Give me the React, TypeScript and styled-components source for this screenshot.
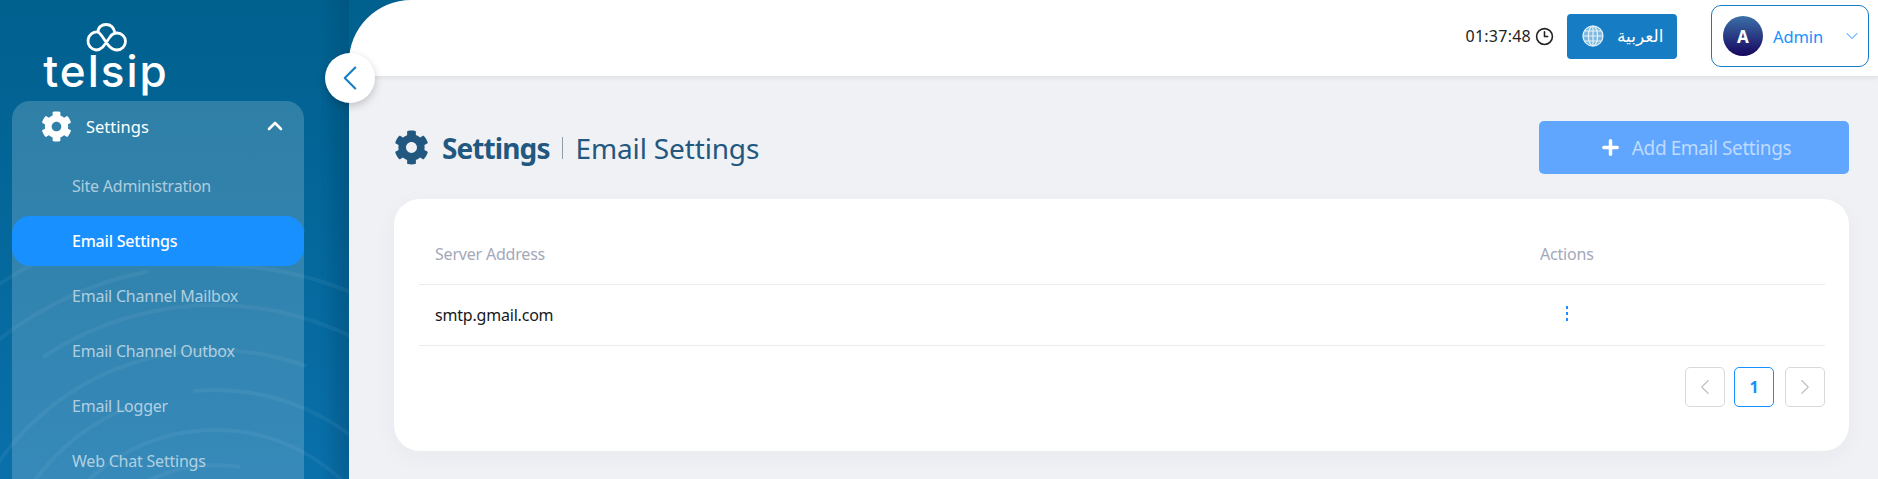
import { ChevronLeft, ChevronRight, ChevronDown, ChevronUp, Clock3, Plus } from 'lucide-react';
import { FaCog } from 'react-icons/fa';
import styled, { createGlobalStyle } from 'styled-components';

const menuItems = [
  { label: 'Site Administration' },
  { label: 'Email Settings', active: true },
  { label: 'Email Channel Mailbox' },
  { label: 'Email Channel Outbox' },
  { label: 'Email Logger' },
  { label: 'Web Chat Settings' },
];

const App = () => {
  return (
    <Shell>
      <GlobalStyle />
      <Sidebar>
        <Swirls viewBox="0 0 349 479" aria-hidden="true">
          {[150, 185, 225, 265, 310, 350, 395].map((r, i) => (
            <circle key={r} cx="215" cy="615" r={r} strokeDasharray="430 70" strokeDashoffset={i * 130 + 700} />
          ))}
        </Swirls>
        <Logo>
          <svg width="44" height="31" viewBox="-1 -1 44 31" fill="none" stroke="#fff" strokeWidth="2.8" strokeLinecap="round">
            <path d="M13 9A9 9 0 0 0 11 27C18 27 21 19 25 14 27 11 29 10 32 10A8.5 8.5 0 0 1 32 27C26 27 23 22 19 16 17 13 15 10 13 9" />
            <path d="M13 9C13 4 17 1.5 21 1.5 26 1.5 29 5 30 10" />
          </svg>
          <LogoText>telsip</LogoText>
        </Logo>
        <MenuPanel>
          <MenuGroup>
            <FaCog size={31} color="#fff" />
            <GroupLabel>Settings</GroupLabel>
            <ChevronUp size={24} strokeWidth={2.6} color="#fff" />
          </MenuGroup>
          {menuItems.map((item) => (
            <MenuItem key={item.label} $active={item.active}>
              {item.label}
            </MenuItem>
          ))}
        </MenuPanel>
      </Sidebar>

      <CollapseButton>
        <ChevronLeft size={42} strokeWidth={1.2} color="#167dc4" />
      </CollapseButton>

      <Main>
        <Header>
          <Time>01:37:48</Time>
          <Clock3 size={19} strokeWidth={2} color="#222" />
          <LangButton>
            <svg width="22" height="22" viewBox="0 0 22 22" fill="none" stroke="#e4f1fa" strokeWidth="1.2">
              <circle cx="11" cy="11" r="10" fill="#7fb8de" />
              <ellipse cx="11" cy="11" rx="4.6" ry="10" />
              <path d="M11 1v20M1 11h20M2.4 6h17.2M2.4 16h17.2" />
            </svg>
            <LangLabel lang="ar" dir="rtl">العربية</LangLabel>
          </LangButton>
          <UserBox>
            <Avatar>A</Avatar>
            <UserName>Admin</UserName>
            <ChevronDown size={20} strokeWidth={1.2} color="#1890ff" />
          </UserBox>
        </Header>

        <Content>
          <TitleRow>
            <Title>
              <FaCog size={35} color="#22587f" />
              <TitleMain>Settings</TitleMain>
              <TitleDivider />
              <TitleSub>Email Settings</TitleSub>
            </Title>
            <AddButton>
              <Plus size={23} strokeWidth={3.6} color="#fff" />
              Add Email Settings
            </AddButton>
          </TitleRow>

          <Card>
            <HeadRow>
              <HeadCell>Server Address</HeadCell>
              <HeadCell>Actions</HeadCell>
            </HeadRow>
            <BodyRow>
              <BodyCell>smtp.gmail.com</BodyCell>
              <BodyCell>
                <Dots>
                  <Dot />
                  <Dot />
                  <Dot />
                </Dots>
              </BodyCell>
            </BodyRow>
            <Pagination>
              <PageButton>
                <ChevronLeft size={26} strokeWidth={1} color="#bfbfbf" />
              </PageButton>
              <PageButton $active>1</PageButton>
              <PageButton>
                <ChevronRight size={26} strokeWidth={1} color="#bfbfbf" />
              </PageButton>
            </Pagination>
          </Card>
        </Content>
      </Main>
    </Shell>
  );
};

const GlobalStyle = createGlobalStyle`
  html, body {
    margin: 0;
    height: 100%;
    overflow: hidden;
  }

  body {
    font-family: 'Noto Sans', Roboto, sans-serif;
  }

  * {
    box-sizing: border-box;
  }
`;

const Shell = styled.div`
  position: relative;
  display: flex;
  width: 1878px;
  height: 479px;
  overflow: hidden;
  background: linear-gradient(180deg, #00608e 0%, #0a70aa 100%);
`;

const Sidebar = styled.aside`
  position: relative;
  flex: 0 0 349px;
  padding: 0 45px 0 12px;
  overflow: hidden;
  box-shadow: inset -30px 0 14px -14px rgba(0, 40, 70, 0.14);
`;

const Swirls = styled.svg`
  position: absolute;
  left: 0;
  top: 0;
  width: 349px;
  height: 479px;
  fill: none;
  stroke: rgba(255, 255, 255, 0.05);
  stroke-width: 4;
  stroke-linecap: round;
`;

const Logo = styled.div`
  position: relative;
  height: 101px;
  padding-top: 22px;
  display: flex;
  flex-direction: column;
  align-items: center;
  width: 188px;
  color: #fff;
`;

const LogoText = styled.div`
  font-family: Inter, sans-serif;
  font-size: 44px;
  font-weight: 500;
  line-height: 40px;
  letter-spacing: 2px;
  margin-top: -2px;
`;

const MenuPanel = styled.nav`
  position: relative;
  height: 400px;
  border-radius: 18px 18px 0 0;
  background: rgba(255, 255, 255, 0.18);
`;

const MenuGroup = styled.div`
  display: flex;
  align-items: center;
  height: 50px;
  padding: 0 17px 0 29px;
  margin-bottom: 10px;
  color: #fff;

  svg:last-child {
    margin-left: auto;
  }
`;

const GroupLabel = styled.span`
  margin-left: 14px;
  font-size: 16.5px;
`;

const MenuItem = styled.div<{ $active?: boolean }>`
  display: flex;
  align-items: center;
  height: 50px;
  margin-bottom: 5px;
  padding-left: 60px;
  font-size: 16px;
  letter-spacing: -0.22px;
  border-radius: 18px;
  color: ${(p) => (p.$active ? '#fff' : 'rgba(255, 255, 255, 0.62)')};
  background: ${(p) => (p.$active ? '#1890ff' : 'transparent')};
  font-weight: ${(p) => (p.$active ? 500 : 400)};
`;

const CollapseButton = styled.button`
  position: absolute;
  left: 325px;
  top: 53px;
  z-index: 2;
  width: 50px;
  height: 50px;
  padding: 0;
  display: flex;
  align-items: center;
  justify-content: center;
  border: 0;
  border-radius: 50%;
  background: #fff;
  box-shadow: 0 3px 8px rgba(0, 0, 0, 0.2);
`;

const Main = styled.main`
  flex: 1;
  min-width: 0;
  display: flex;
  flex-direction: column;
`;

const Header = styled.header`
  position: relative;
  z-index: 1;
  flex: 0 0 76px;
  display: flex;
  align-items: center;
  justify-content: flex-end;
  padding: 0 9px 4px 0;
  background: #fff;
  border-top-left-radius: 62px;
  box-shadow: 0 2px 5px rgba(0, 0, 0, 0.07);
`;

const Time = styled.span`
  margin-right: 4px;
  font-size: 16px;
  letter-spacing: 0.25px;
  color: #222;
`;

const LangButton = styled.button`
  width: 110px;
  height: 45px;
  margin: 0 34px 0 13px;
  display: flex;
  align-items: center;
  gap: 13px;
  padding: 0 0 0 15px;
  border: 0;
  border-radius: 4px;
  background: #167dc4;
`;

const LangLabel = styled.span`
  font-family: 'DejaVu Sans', sans-serif;
  font-size: 17px;
  color: #fff;
`;

const UserBox = styled.div`
  width: 158px;
  height: 62px;
  display: flex;
  align-items: center;
  padding: 0 6px 0 11px;
  border: 1px solid #167dc4;
  border-radius: 10px;
  background: #fff;

  svg {
    margin-left: auto;
  }
`;

const Avatar = styled.div`
  width: 40px;
  height: 40px;
  display: flex;
  align-items: center;
  justify-content: center;
  border-radius: 50%;
  color: #fff;
  font-size: 17px;
  font-weight: 700;
  background: linear-gradient(180deg, #3c70a8 0%, #16065f 100%);
`;

const UserName = styled.span`
  margin-left: 10px;
  font-size: 16.5px;
  letter-spacing: -0.1px;
  color: #1890ff;
`;

const Content = styled.div`
  flex: 1;
  padding: 45px 29px 0 45px;
  background: #f0f1f5;
  box-shadow: -12px 0 18px rgba(0, 40, 70, 0.08);
`;

const TitleRow = styled.div`
  display: flex;
  align-items: center;
  justify-content: space-between;
  height: 53px;
  margin-bottom: 25px;
`;

const Title = styled.div`
  display: flex;
  align-items: center;
  color: #22587f;
`;

const TitleMain = styled.h1`
  margin: 0 0 0 13px;
  font-size: 28px;
  font-weight: 700;
  letter-spacing: -0.9px;
`;

const TitleDivider = styled.span`
  width: 1px;
  height: 22px;
  margin: 0 13px 0 12px;
  background: #8f9aa6;
`;

const TitleSub = styled.h2`
  margin: 0;
  font-size: 28px;
  font-weight: 400;
  letter-spacing: -0.15px;
`;

const AddButton = styled.button`
  width: 310px;
  height: 53px;
  display: flex;
  align-items: center;
  justify-content: center;
  gap: 10px;
  padding-right: 4px;
  border: 0;
  border-radius: 5px;
  font-family: inherit;
  font-size: 19px;
  letter-spacing: -0.4px;
  color: rgba(255, 255, 255, 0.6);
  background: #60a6ff;
`;

const Card = styled.section`
  height: 252px;
  padding: 26px 24px 0 25px;
  border-radius: 26px;
  background: #fff;
  box-shadow: 0 6px 24px rgba(40, 50, 80, 0.04);
`;

const HeadRow = styled.div`
  display: grid;
  grid-template-columns: 1fr 301px;
  align-items: center;
  height: 60px;
  padding-bottom: 2px;
  border-bottom: 1px solid #eaecee;
`;

const HeadCell = styled.div`
  padding-left: 16px;
  font-size: 16px;
  letter-spacing: -0.2px;
  color: #a3a8b8;
`;

const BodyRow = styled.div`
  display: grid;
  grid-template-columns: 1fr 301px;
  align-items: center;
  height: 61px;
  border-bottom: 1px solid #eaecee;
`;

const BodyCell = styled.div`
  padding-left: 16px;
  font-size: 16px;
  letter-spacing: -0.2px;
  color: #16181c;
`;

const Dots = styled.div`
  display: flex;
  flex-direction: column;
  gap: 3px;
  width: 3px;
  margin: -3px 0 0 26px;
`;

const Dot = styled.span`
  width: 2px;
  height: 3px;
  background: #1890ff;
`;

const Pagination = styled.div`
  display: flex;
  justify-content: flex-end;
  gap: 9px;
  margin-top: 21px;
`;

const PageButton = styled.div<{ $active?: boolean }>`
  width: 40px;
  height: 40px;
  margin-right: ${(p) => (p.$active ? '2px' : '0')};
  display: flex;
  align-items: center;
  justify-content: center;
  border: 1px solid ${(p) => (p.$active ? '#1890ff' : '#d9d9d9')};
  border-radius: 5px;
  font-size: 16px;
  font-weight: 700;
  color: #1890ff;
`;

export default App;
